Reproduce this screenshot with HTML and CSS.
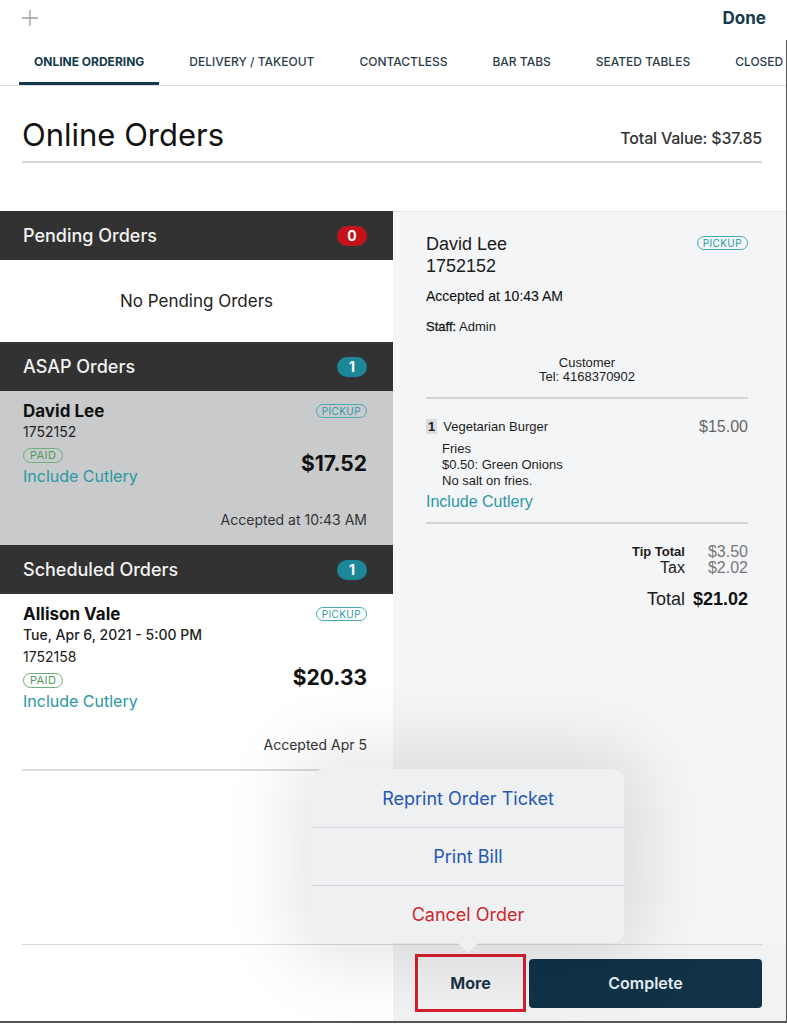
FILE: index.html
```html
<!DOCTYPE html>
<html lang="en">
<head>
<meta charset="utf-8">
<title>Online Orders</title>
<link rel="stylesheet" href="styles.css">
</head>
<body>
<div class="topbar">
  <svg class="plus" width="18" height="18" viewBox="0 0 18 18" aria-hidden="true"><path d="M9 1v16M1 9h16" stroke="#9c9c9c" stroke-width="1.3" fill="none"/></svg>
  <span class="done">Done</span>
</div>
<div class="main">
  <nav class="tabs">
    <div class="tab active">ONLINE ORDERING</div>
    <div class="tab">DELIVERY / TAKEOUT</div>
    <div class="tab">CONTACTLESS</div>
    <div class="tab">BAR TABS</div>
    <div class="tab">SEATED TABLES</div>
    <div class="tab">CLOSED</div>
  </nav>
  <header class="page-head">
    <h1>Online Orders</h1>
    <span class="total">Total Value: $37.85</span>
  </header>
  <div class="panels">
    <section class="list">
      <div class="sec-head"><span>Pending Orders</span><span class="badge red">0</span></div>
      <div class="empty">No Pending Orders</div>
      <div class="sec-head"><span>ASAP Orders</span><span class="badge teal">1</span></div>
      <div class="order selected">
        <div class="o-top">
          <div class="o-left">
            <div class="o-name">David Lee</div>
            <div class="o-line">1752152</div>
            <div><span class="pill paid">PAID</span></div>
            <div class="cutlery">Include Cutlery</div>
          </div>
          <div class="o-right">
            <span class="pill pickup">PICKUP</span>
            <div class="price asap">$17.52</div>
          </div>
        </div>
        <div class="accepted">Accepted at 10:43 AM</div>
      </div>
      <div class="sec-head"><span>Scheduled Orders</span><span class="badge teal">1</span></div>
      <div class="order sched">
        <div class="o-top">
          <div class="o-left">
            <div class="o-name">Allison Vale</div>
            <div class="o-line o-date">Tue, Apr 6, 2021 - 5:00 PM</div>
            <div class="o-line">1752158</div>
            <div><span class="pill paid">PAID</span></div>
            <div class="cutlery">Include Cutlery</div>
          </div>
          <div class="o-right">
            <span class="pill pickup">PICKUP</span>
            <div class="price later">$20.33</div>
          </div>
        </div>
        <div class="accepted">Accepted Apr 5</div>
      </div>
    </section>
    <section class="detail">
      <div class="d-head">
        <div>
          <div class="d-name">David Lee</div>
          <div class="d-name">1752152</div>
        </div>
        <span class="pill pickup d-pill">PICKUP</span>
      </div>
      <div class="d-accepted">Accepted at 10:43 AM</div>
      <div class="d-staff"><b>Staff:</b> Admin</div>
      <div class="d-customer">Customer<br>Tel: 4168370902</div>
      <div class="rule"></div>
      <div class="item">
        <span><span class="qty">1</span>Vegetarian Burger</span>
        <span class="item-price">$15.00</span>
      </div>
      <div class="mods">Fries<br>$0.50: Green Onions<br>No salt on fries.</div>
      <div class="d-cutlery">Include Cutlery</div>
      <div class="rule rule2"></div>
      <div class="totals">
        <span class="t-label tip">Tip Total</span><span class="t-amt">$3.50</span>
        <span class="t-label">Tax</span><span class="t-amt">$2.02</span>
        <span class="t-label grand">Total</span><span class="t-amt grand-amt">$21.02</span>
      </div>
    </section>
  </div>
  <footer class="actions">
    <div class="actions-inner">
      <div class="more-frame"><button class="more">More</button></div>
      <button class="complete">Complete</button>
    </div>
    <div class="popover">
      <div class="pop-row blue">Reprint Order Ticket</div>
      <div class="pop-row blue">Print Bill</div>
      <div class="pop-row red">Cancel Order</div>
    </div>
  </footer>
</div>
</body>
</html>
```
FILE: styles.css
```css
* { box-sizing: border-box; }
body {
  margin: 0;
  width: 787px;
  height: 1024px;
  overflow: hidden;
  background: #fff;
  font-family: Inter, "Liberation Sans", sans-serif;
  color: #222;
}
.topbar {
  height: 40px;
  display: flex;
  align-items: center;
  justify-content: space-between;
  padding: 0 21px 4px 21px;
}
.plus { display: block; }
.done { font-size: 17px; font-weight: 700; color: #15394d; }

.main {
  height: 983px;
  border-right: 1px solid #555;
  border-bottom: 2px solid #555;
  display: flex;
  flex-direction: column;
}
.tabs {
  display: flex;
  flex-shrink: 0;
  height: 46px;
  padding-left: 19px;
  gap: 15px;
  border-bottom: 1px solid #dedede;
  overflow: hidden;
}
.tab {
  padding: 0 15px;
  display: flex;
  align-items: center;
  white-space: nowrap;
  font-size: 12px;
  font-weight: 500;
  color: #2c3e4a;
  border-bottom: 3px solid transparent;
}
.tab.active { font-weight: 700; color: #15394d; border-bottom-color: #15394d; }

.page-head {
  flex-shrink: 0;
  display: flex;
  justify-content: space-between;
  align-items: flex-end;
  margin: 0 24px 0 22px;
  padding: 31px 0 8px;
  border-bottom: 2px solid #d6d6d6;
}
.page-head h1 { margin: 0; font-size: 31px; line-height: 36px; font-weight: 400; color: #111; }
.total { font-size: 16px; line-height: 20px; font-weight: 500; color: #333; margin-bottom: 5px; letter-spacing: -0.2px; }

.panels { margin-top: 48px; flex: 1; display: flex; min-height: 0; }
.list { width: 393px; flex-shrink: 0; background: #fff; }
.sec-head {
  height: 49px;
  display: flex;
  align-items: center;
  justify-content: space-between;
  padding: 0 26px 0 23px;
  background: #323232;
  color: #f2f2f2;
  font-size: 18px;
  font-weight: 500;
}
.badge {
  min-width: 30px;
  height: 20px;
  border-radius: 10px;
  display: flex;
  align-items: center;
  justify-content: center;
  font-size: 14px;
  font-weight: 700;
  color: #fff;
}
.badge.red { background: #c5121a; }
.badge.teal { background: #1b8797; }
.empty { height: 82px; display: flex; align-items: center; justify-content: center; font-size: 17px; color: #222; }

.order { padding: 10px 26px 0 23px; }
.order.selected { background: #c9cacc; height: 154px; }
.order.sched { margin-left: 22px; padding-left: 1px; padding-bottom: 15px; border-bottom: 2px solid #dcdcdc; }
.o-top { display: flex; justify-content: space-between; }
.o-left { display: flex; flex-direction: column; align-items: flex-start; }
.o-right { display: flex; flex-direction: column; align-items: flex-end; padding-top: 3px; }
.o-name { font-size: 17px; line-height: 20px; font-weight: 700; color: #111; }
.o-line { font-size: 14px; line-height: 22px; color: #222; }
.o-date { font-weight: 500; }
.pill {
  display: inline-block;
  border: 1px solid;
  border-radius: 8px;
  font-size: 10px;
  line-height: 12px;
  padding: 0 5px;
  letter-spacing: 0.4px;
}
.pill.paid { color: #4c9c5c; border-color: #6bb07a; margin-top: 4px; font-size: 11px; line-height: 13px; padding: 0 6px; }
.pill.pickup { color: #2a9aa4; border-color: #49aab3; }
.cutlery { font-size: 16px; line-height: 22px; color: #2a98a4; margin-top: 2px; }
.price { font-size: 21px; line-height: 26px; font-weight: 700; color: #111; }
.price.asap { margin-top: 33px; }
.price.later { margin-top: 44px; }
.accepted { margin-top: 24px; text-align: right; font-size: 14px; line-height: 18px; color: #333; }

.detail {
  flex: 1;
  background: #f4f5f7;
  border-top: 1px solid #e6e6e6;
  padding: 21px 38px 0 33px;
  font-family: "Liberation Sans", Arial, sans-serif;
  color: #1c1c1c;
}
.d-head { display: flex; justify-content: space-between; align-items: flex-start; }
.d-name { font-size: 18px; line-height: 22px; }
.d-pill { margin-top: 3px; font-family: Inter, sans-serif; }
.d-accepted { margin-top: 10px; font-size: 14px; line-height: 18px; color: #111; -webkit-text-stroke: 0.1px #111; }
.d-staff { margin-top: 14px; font-size: 13px; line-height: 16px; }
.d-staff b { font-weight: 400; -webkit-text-stroke: 0.3px #111; }
.d-customer { margin-top: 21px; text-align: center; font-size: 13px; line-height: 14px; }
.rule { height: 2px; background: #d4d4d4; margin-top: 13px; }
.rule2 { margin-top: 10px; }
.item { display: flex; justify-content: space-between; margin-top: 19px; font-size: 13px; line-height: 18px; }
.qty { background: #dcdcdc; font-weight: 700; padding: 0 2px; margin-right: 6px; }
.item-price { font-size: 16px; color: #666; }
.mods { margin-top: 5px; padding-left: 16px; font-size: 13px; line-height: 16px; }
.d-cutlery { margin-top: 3px; font-size: 16px; line-height: 20px; color: #2a98a4; }
.totals {
  margin-top: 20px;
  display: grid;
  grid-template-columns: auto auto;
  justify-content: end;
  column-gap: 8px;
  align-items: center;
}
.t-label { text-align: right; font-size: 16px; line-height: 16px; }
.t-label.tip { font-size: 13px; font-weight: 700; }
.t-amt { text-align: right; font-size: 16px; line-height: 16px; color: #777; }
.t-label.grand { font-size: 18px; line-height: 22px; margin-top: 12px; }
.t-amt.grand-amt { font-size: 18px; line-height: 22px; margin-top: 12px; font-weight: 700; color: #111; }

.actions {
  position: relative;
  flex-shrink: 0;
  height: 77px;
  background: linear-gradient(90deg, #fff 0, #fff 393px, #f1f2f4 393px);
}
.actions-inner {
  height: 100%;
  margin: 0 24px 0 22px;
  border-top: 1px solid #d8d8d8;
  display: flex;
  justify-content: flex-end;
  align-items: center;
  gap: 3px;
}
.more-frame { border: 3px solid #d41f2e; width: 111px; height: 58px; padding: 0; }
.more {
  width: 100%;
  height: 100%;
  border: 0;
  background: #eef0f2;
  font-family: Inter, sans-serif;
  font-size: 16px;
  font-weight: 700;
  color: #1b3445;
}
.complete {
  width: 233px;
  height: 49px;
  border: 0;
  border-radius: 4px;
  background: #0f3247;
  color: #e6edf1;
  font-family: Inter, sans-serif;
  font-size: 16px;
  font-weight: 600;
}
.popover {
  position: absolute;
  left: 312px;
  bottom: calc(100% + 1px);
  width: 312px;
  background: #eff0f2;
  border-radius: 12px;
  box-shadow: 0 0 70px 20px rgba(0, 0, 0, 0.1);
}
.popover::after {
  content: "";
  position: absolute;
  left: 146px;
  bottom: -10px;
  border-left: 10px solid transparent;
  border-right: 10px solid transparent;
  border-top: 10px solid #eff0f2;
}
.pop-row {
  height: 58px;
  display: flex;
  align-items: center;
  justify-content: center;
  font-size: 18px;
  border-top: 1px solid #d3d5d8;
}
.pop-row:first-child { border-top: 0; }
.pop-row.blue { color: #2358b4; }
.pop-row.red { color: #c9282d; }
```
